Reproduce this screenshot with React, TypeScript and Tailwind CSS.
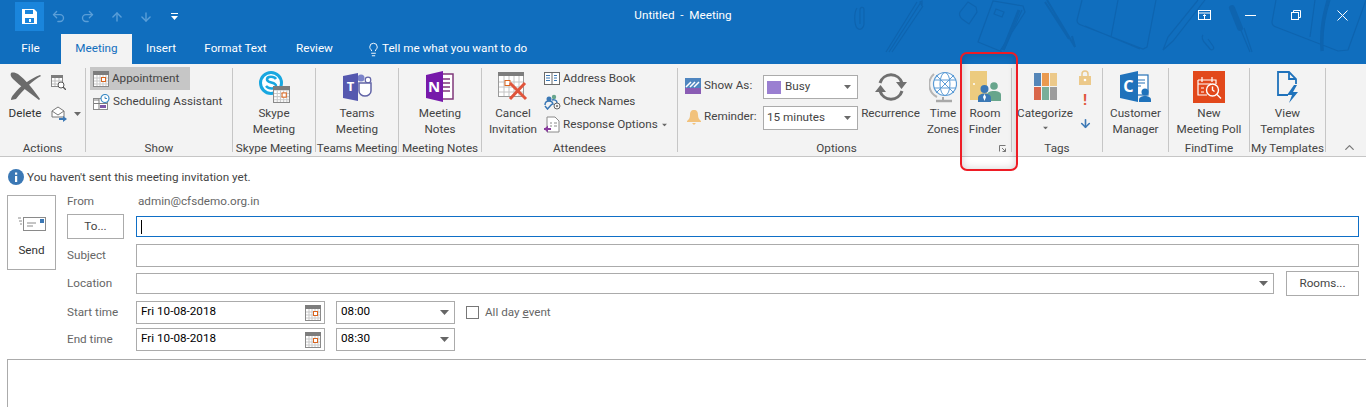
import type { ReactNode } from 'react';
import { ArrowDown, ArrowUp, ChevronUp, Lightbulb, Redo2, Undo2 } from 'lucide-react';

const Caret = ({ className = '' }: { className?: string }) => (
	<svg width="7" height="4" viewBox="0 0 7 4" className={className}>
		<path d="M0 0h7L3.5 4z" fill="#6a6a6a" />
	</svg>
);

const CalendarIcon = ({ size = 16 }: { size?: number }) => (
	<svg width={size} height={size} viewBox="0 0 16 16" className="shrink-0">
		<rect x="0.5" y="0.5" width="15" height="15" fill="#fff" stroke="#8a8a8a" />
		<rect x="0" y="0" width="16" height="4" fill="#7d7d7d" />
		<path d="M1 7h14M1 10h14M1 13h14M4 4v11M7 4v11M10 4v11M13 4v11" stroke="#c9c9c9" strokeWidth="1" />
		<rect x="8.5" y="6.5" width="4" height="4" fill="#fff" stroke="#d9641e" />
	</svg>
);

const DeleteIcon = () => (
	<svg width="32" height="29" viewBox="0 0 32 29">
		<path d="M1 1c2-1 5 0 7 1 8 6 15 15 22 25l-1 1C20 21 10 14 3 7 1 5 0 3 1 1z" fill="#6b6b6b" />
		<path d="M30 3l1 1C23 8 14 17 6 27l-5 1c0-2 1-4 3-6C11 13 20 7 30 3z" fill="#6b6b6b" />
	</svg>
);

const SkypeIcon = () => (
	<div className="relative w-[32px] h-[33px]">
		<svg width="26" height="26" viewBox="0 0 26 26">
			<circle cx="13" cy="13" r="10.5" fill="#fff" stroke="#18a7e0" strokeWidth="3" />
			<path d="M18 9c-2-3-9-3-9 0.500 0 4 9 2 9 6.500 0 3-7 3.500-10 0" fill="none" stroke="#18a7e0" strokeWidth="2.600" />
		</svg>
		<div className="absolute right-0 bottom-0 bg-white">
			<CalendarIcon size={17} />
		</div>
	</div>
);

const TeamsIcon = () => (
	<svg width="30" height="30" viewBox="0 0 30 30">
		<circle cx="19" cy="6" r="3.5" fill="#7b83c9" />
		<circle cx="26" cy="8" r="2.800" fill="#fff" stroke="#6264a7" strokeWidth="1.200" />
		<path d="M17 11h12v8c0 3-3 5-6 5s-6-2-6-5z" fill="#fff" stroke="#6264a7" strokeWidth="1.500" />
		<path d="M1 4l15-3v28L1 26z" fill="#5558af" />
		<text x="8.500" y="19" textAnchor="middle" fontSize="13" fontWeight="700" fill="#fff" fontFamily="Noto Sans">T</text>
	</svg>
);

const OneNoteIcon = () => (
	<svg width="30" height="31" viewBox="0 0 30 31">
		<rect x="13" y="3" width="15" height="25" fill="#fff" stroke="#80397b" strokeWidth="1.500" />
		<path d="M17 8h8M17 12h8M17 16h8M17 20h8" stroke="#80397b" strokeWidth="1.500" />
		<path d="M1 4l17-4v31L1 27z" fill="#7719aa" />
		<text x="9" y="21" textAnchor="middle" fontSize="15" fontWeight="700" fill="#fff" fontFamily="Noto Sans">N</text>
	</svg>
);

const CancelIcon = () => (
	<svg width="30" height="29" viewBox="0 0 30 29">
		<rect x="0.500" y="0.500" width="25" height="24" fill="#fff" stroke="#9a9a9a" />
		<rect width="26" height="4" fill="#7d7d7d" />
		<path d="M1 10h24M1 15h24M1 20h24M6 4v20M11 4v20M16 4v20M21 4v20" stroke="#c4c4c4" />
		<rect x="7" y="8.500" width="5" height="5" fill="#fff" stroke="#d9641e" />
		<path d="M12 11l16 16M27 11L12 27" stroke="#e0553c" strokeWidth="3" />
	</svg>
);

const RecurrenceIcon = () => (
	<svg width="32" height="32" viewBox="0 0 32 32" fill="none">
		<path d="M5 12A11.500 11.500 0 0 1 27 12" stroke="#707070" strokeWidth="3" />
		<path d="M27 20A11.500 11.500 0 0 1 5 20" stroke="#707070" strokeWidth="3" />
		<path d="M21 11h11l-5.500 7zM0 21h11l-5.500-7z" fill="#707070" />
	</svg>
);

const GlobeIcon = () => (
	<svg width="28" height="32" viewBox="0 0 28 32" fill="none">
		<path d="M5 3A14 14 0 0 0 8 26" stroke="#b5b5b5" strokeWidth="2" />
		<path d="M7 30h16" stroke="#a8a8a8" strokeWidth="2.500" />
		<path d="M14 26v4" stroke="#a8a8a8" strokeWidth="2" />
		<circle cx="16" cy="13" r="11.500" fill="#fff" stroke="#5b9bd5" strokeWidth="1.200" />
		<ellipse cx="16" cy="13" rx="5" ry="11.500" stroke="#5b9bd5" />
		<path d="M5 9h22M5 17h22M7 4l18 18M25 4L7 22" stroke="#5b9bd5" />
	</svg>
);

const RoomIcon = () => (
	<svg width="31" height="31" viewBox="0 0 31 31">
		<rect x="0" y="0" width="17" height="29" fill="#eccb7f" />
		<circle cx="4" cy="13" r="1" fill="#fff" />
		<circle cx="24" cy="15" r="3.800" fill="#67a58c" />
		<path d="M17 30v-6c0-3 3-4 7-4s7 1 7 4v6z" fill="#67a58c" />
		<circle cx="14.500" cy="18" r="4" fill="#3b78b5" />
		<path d="M8 31v-4c0-3 3-4.500 6.500-4.500S21 24 21 27v4z" fill="#3b78b5" />
		<path d="M14.500 23l-1.500 3 1.500 4 1.500-4z" fill="#fff" />
	</svg>
);

const CategorizeIcon = () => (
	<div className="grid grid-cols-3 grid-rows-2 gap-px w-[23px] h-[27px]">
		<div className="bg-[#5586b8]" />
		<div className="bg-[#ea9a50]" />
		<div className="bg-[#ecc98a]" />
		<div className="bg-[#d9664a]" />
		<div className="bg-[#79ae99]" />
		<div className="bg-[#9c9c9c]" />
	</div>
);

const CustomerIcon = () => (
	<svg width="31" height="31" viewBox="0 0 31 31">
		<rect x="14" y="4" width="14" height="20" fill="#fff" stroke="#2672b8" strokeWidth="1.200" />
		<path d="M18 9h7M18 12h7M18 15h3" stroke="#2672b8" strokeWidth="1.200" />
		<path d="M0 4l18-4v31L0 27z" fill="#1f72bb" />
		<text x="8.500" y="21" textAnchor="middle" fontSize="16" fontWeight="700" fill="#fff" fontFamily="Noto Sans">C</text>
		<circle cx="25" cy="21" r="3.500" fill="#1f72bb" />
		<path d="M19 31v-2c0-3 3-4 6-4s6 1 6 4v2z" fill="#1f72bb" />
	</svg>
);

const PollIcon = () => (
	<svg width="32" height="32" viewBox="0 0 32 32" fill="none">
		<rect width="32" height="32" fill="#e2481b" />
		<path d="M5 9h18v4M5 9v15h9M5 13h13M9 6v5M19 6v5M8 17h3M8 21h3" stroke="#fff" strokeWidth="1.200" />
		<circle cx="19.500" cy="19" r="6" stroke="#fff" strokeWidth="1.400" />
		<path d="M19.500 15.500V19l2 1.500M24 23.500l4 4" stroke="#fff" strokeWidth="1.400" />
	</svg>
);

const TemplatesIcon = () => (
	<svg width="24" height="32" viewBox="0 0 24 32" fill="none">
		<path d="M12 24H2V1h11l7 7v5M13 1v7h7" stroke="#1f72bb" strokeWidth="1.800" />
		<path d="M18 14l-7 10h5l-3 8 9-11h-5l4-7z" fill="#1f72bb" />
	</svg>
);

const SmallCalPeek = () => (
	<svg width="15" height="15" viewBox="0 0 15 15" fill="none">
		<rect x="0.500" y="0.500" width="11" height="11" fill="#fff" stroke="#8a8a8a" />
		<rect width="12" height="3" fill="#7d7d7d" />
		<path d="M1 6h10M1 9h10M4 3v8M8 3v8" stroke="#bdbdbd" />
		<circle cx="10" cy="10" r="3" fill="#fff" stroke="#555" />
		<path d="M12 12l3 3" stroke="#555" strokeWidth="1.300" />
	</svg>
);

const MoveIcon = () => (
	<svg width="16" height="16" viewBox="0 0 16 16" fill="none">
		<path d="M1 5l6-4 6 4v6H1z" fill="#fff" stroke="#777" />
		<path d="M1 5l6 4 6-4" stroke="#777" />
		<path d="M8 13h5" stroke="#3b78b5" strokeWidth="2" />
		<path d="M12 10l4 3-4 3z" fill="#3b78b5" />
	</svg>
);

const ScheduleIcon = () => (
	<svg width="17" height="16" viewBox="0 0 17 16" fill="none">
		<rect x="0.500" y="4.500" width="14" height="11" fill="#fff" stroke="#8a8a8a" />
		<path d="M1 6h5M6 5v10M1 9.500h13" stroke="#7d7d7d" />
		<rect x="7" y="11" width="6" height="3" fill="#7e57a8" />
		<circle cx="12" cy="4.500" r="4" fill="#fff" stroke="#3b8ac4" strokeWidth="1.200" />
		<path d="M12 2.500v2h2" stroke="#3b8ac4" />
	</svg>
);

const AddressIcon = () => (
	<svg width="16" height="13" viewBox="0 0 16 13" fill="none">
		<rect x="0.500" y="0.500" width="15" height="12" fill="#fff" stroke="#6a6a6a" />
		<path d="M8 1v11" stroke="#6a6a6a" />
		<path d="M2 3.500h4M2 6h4M2 8.500h4M10 3.500h3M10 6h3M10 8.500h3" stroke="#3b78b5" />
	</svg>
);

const CheckNamesIcon = () => (
	<svg width="17" height="16" viewBox="0 0 17 16" fill="none">
		<circle cx="5" cy="5" r="2.500" fill="#3b78b5" />
		<circle cx="10" cy="3" r="2.200" fill="#67a58c" />
		<path d="M1 11c0-3 2-4 4-4s4 1 4 4M8 6c2-.5 5 0 5 3" stroke="#3b78b5" strokeWidth="1.500" />
		<path d="M1 12l2.500 3L8 10" stroke="#3b78b5" strokeWidth="1.500" />
		<circle cx="13" cy="12" r="3" stroke="#666" />
		<circle cx="13" cy="12" r="1" fill="#666" />
	</svg>
);

const ResponseIcon = () => (
	<svg width="16" height="17" viewBox="0 0 16 17" fill="none">
		<path d="M3 1h8l4 4v11H3z" fill="#fff" stroke="#8a8a8a" />
		<path d="M6 7h2M10 7h3M6 10h2M10 10h3" stroke="#8a8a8a" />
		<path d="M0 13h7" stroke="#8a3d9e" strokeWidth="2" />
		<path d="M4 9.500L0 13l4 3.500z" fill="#8a3d9e" />
	</svg>
);

const ShowAsIcon = () => (
	<svg width="16" height="16" viewBox="0 0 16 16">
		<rect width="16" height="11" fill="#4f86c0" />
		<rect y="10" width="16" height="6" fill="#8a5cb4" />
		<path d="M1 9l5-5M5 9l5-5M9 9l5-5" stroke="#fff" strokeWidth="1.500" />
	</svg>
);

const BellIcon = () => (
	<svg width="14" height="15" viewBox="0 0 14 15">
		<path d="M7 0c3 0 4 2 4 5 0 3 1 4 3 6v1H0v-1c2-2 3-3 3-6 0-3 1-5 4-5z" fill="#f2c27c" />
		<path d="M5 13h4l-2 2z" fill="#f2c27c" />
	</svg>
);

const LockIcon = () => (
	<svg width="12" height="15" viewBox="0 0 12 15" fill="none">
		<path d="M3 7V4a3 3 0 0 1 6 0v3" stroke="#e9c78b" strokeWidth="1.500" />
		<rect y="6" width="12" height="9" fill="#ecc98a" />
		<circle cx="6" cy="10" r="1.300" fill="#fff" />
	</svg>
);

const SendIcon = () => (
	<svg width="28" height="14" viewBox="0 0 28 14" fill="none">
		<rect x="5.500" y="0.500" width="22" height="13" fill="#fff" stroke="#8a8a8a" />
		<rect x="22" y="2" width="4" height="4" fill="#3b78b5" />
		<path d="M9 6h9M9 9h6M0 1h3M1 4h3M2 7h2" stroke="#8a8a8a" />
	</svg>
);

const TitleDoodles = () => (
	<svg width="1366" height="64" viewBox="0 0 1366 64" fill="none" stroke="#0e64af" strokeWidth="1.200" className="absolute left-0 top-0 pointer-events-none">
		<path d="M857 8c-3 4-3 16 0 20 3 3 7 0 7-4l0-14c0-4-4-3-4 0v14" />
		<path d="M921 2l-32 50M917 2l-31 50M923 6l-31 46M920 2l2-1 0 5z" />
		<path d="M968 2l-8 10c-1 2 0 5 2 7l7 5 8-12-1-5z" />
		<path d="M993 1l-15 41 22 9 25-39-2-6zM1022 10l-18 40M1000 50l3 4M996 9l8 3-2 5-8-3z" />
		<path d="M1019 10l-16 40" strokeWidth="3" />
		<path d="M1047 0l28 47-3-11M1045 2l24 37" strokeWidth="2" />
		<path d="M1082 0l-5 20c0 3 1 4 4 5l62 24 4-2 9-47M1118 0l-7 37M1085 26l55 23" />
		<path d="M1198 0l-30 37-5 13 10-9 32-41" />
		<path d="M1203 35c-2 2 0 6 2 8l5 6c2 2 5 0 3-3l-5-7" />
		<path d="M1232 8l8 20" strokeWidth="6" strokeLinecap="round" />
		<path d="M1240 28l10 24M1244 28l8 24" />
		<path d="M1276 0l-4 22c0 3 1 4 4 5l62 24 10-1 18-50M1315 0l-5 37M1330 0c-4 12-8 30-7 51" />
		<path d="M1328 0c-4 14-8 30-6 51" strokeWidth="3" />
	</svg>
);

const Separator = () => <div className="w-px h-[84px] mt-[4px] bg-[#c6c6c6] shrink-0" />;

type GroupProps = {
	width: string;
	label?: string;
	labelClass?: string;
	children: ReactNode;
};

const Group = ({ width, label, labelClass = '', children }: GroupProps) => (
	<div className={`${width} h-[92px] pt-[4px] flex flex-col shrink-0 relative`}>
		<div className="flex-1 flex min-h-0">{children}</div>
		<div className={`h-[16px] leading-[16px] text-center whitespace-nowrap ${labelClass}`}>{label}</div>
	</div>
);

const LargeButton = ({ icon, lines, className = 'flex-1' }: { icon: ReactNode; lines: string[]; className?: string }) => (
	<div className={`${className} flex flex-col items-center`}>
		<div className="h-[37px] flex items-center justify-center">{icon}</div>
		{lines.map((line) => (
			<div key={line} className="leading-[16px] whitespace-nowrap">
				{line}
			</div>
		))}
	</div>
);

const SmallButton = ({ icon, label, caret }: { icon: ReactNode; label: string; caret?: boolean }) => (
	<div className="h-[23px] flex items-center">
		<div className="w-[19px] flex justify-start">{icon}</div>
		<span className="whitespace-nowrap">{label}</span>
		{caret && <Caret className="ml-[3px] scale-75" />}
	</div>
);

const RibbonSelect = ({ children }: { children: ReactNode }) => (
	<div className="w-[95px] h-[24px] bg-white border border-[#ababab] flex items-center pl-[3px] pr-[6px] justify-between text-[#444]">
		<div className="flex items-center">{children}</div>
		<Caret />
	</div>
);

const Ribbon = () => (
	<div className="h-[93px] bg-[#f3f3f3] border-b border-[#c6c6c6] flex text-[#444]">
		<Group width="w-[85px]" label="Actions">
			<div className="w-[50px] flex flex-col items-center">
				<div className="h-[37px] flex items-center justify-center pl-[1px]">
					<DeleteIcon />
				</div>
				<div className="leading-[16px] text-[#333]">Delete</div>
			</div>
			<div className="flex flex-col pl-[1px] pt-[7px]">
				<SmallCalPeek />
				<div className="flex items-center mt-[16px]">
					<MoveIcon />
					<Caret className="ml-[7px]" />
				</div>
			</div>
		</Group>
		<Separator />
		<Group width="w-[146px]" label="Show">
			<div className="flex flex-col pl-[4px] -mt-[1px]">
				<div className="w-[100px] h-[23px] bg-[#c6c6c6] flex items-center pl-[3px] gap-[3px]">
					<CalendarIcon />
					<span>Appointment</span>
				</div>
				<div className="h-[23px] flex items-center pl-[3px] gap-[3px] whitespace-nowrap">
					<ScheduleIcon />
					<span>Scheduling Assistant</span>
				</div>
			</div>
		</Group>
		<Separator />
		<Group width="w-[82px]" label="Skype Meeting">
			<LargeButton icon={<SkypeIcon />} lines={['Skype', 'Meeting']} />
		</Group>
		<Separator />
		<Group width="w-[82px]" label="Teams Meeting">
			<LargeButton icon={<TeamsIcon />} lines={['Teams', 'Meeting']} />
		</Group>
		<Separator />
		<Group width="w-[82px]" label="Meeting Notes">
			<LargeButton icon={<OneNoteIcon />} lines={['Meeting', 'Notes']} />
		</Group>
		<Separator />
		<Group width="w-[195px]" label="Attendees">
			<LargeButton className="w-[62px]" icon={<CancelIcon />} lines={['Cancel', 'Invitation']} />
			<div className="flex flex-col -mt-[1px]">
				<SmallButton icon={<AddressIcon />} label="Address Book" />
				<SmallButton icon={<CheckNamesIcon />} label="Check Names" />
				<SmallButton icon={<ResponseIcon />} label="Response Options" caret />
			</div>
		</Group>
		<Separator />
		<Group width="w-[333px]" label="Options" labelClass="pr-[16px]">
			<div className="w-[85px] flex flex-col pl-[7px] pt-[6px] gap-[7px]">
				<div className="h-[24px] flex items-center gap-[3px]">
					<ShowAsIcon />
					<span>Show As:</span>
				</div>
				<div className="h-[24px] flex items-center gap-[3px]">
					<span className="pl-[2px]"><BellIcon /></span>
					<span>Reminder:</span>
				</div>
			</div>
			<div className="flex flex-col pt-[7px] gap-[7px]">
				<RibbonSelect>
					<span className="w-[14px] h-[13px] bg-[#9a7fd1] mr-[4px]" />
					<span>Busy</span>
				</RibbonSelect>
				<RibbonSelect>
					<span>15 minutes</span>
				</RibbonSelect>
			</div>
			<LargeButton className="w-[65px]" icon={<RecurrenceIcon />} lines={['Recurrence']} />
			<LargeButton className="w-[40px]" icon={<GlobeIcon />} lines={['Time', 'Zones']} />
			<LargeButton className="w-[44px]" icon={<RoomIcon />} lines={['Room', 'Finder']} />
		</Group>
		<Separator />
		<Group width="w-[90px]" label="Tags">
			<div className="w-[66px] flex flex-col items-center">
				<div className="h-[37px] flex items-center justify-center">
					<CategorizeIcon />
				</div>
				<div className="leading-[16px]">Categorize</div>
				<Caret className="mt-[5px] scale-75" />
			</div>
			<div className="w-[14px] flex flex-col items-center -mt-[2px]">
				<div className="h-[23px] flex items-center"><LockIcon /></div>
				<div className="h-[23px] flex items-center text-[#e0553c] font-bold text-[15px]">!</div>
				<div className="h-[23px] flex items-center"><ArrowDown size={13} strokeWidth={3} className="text-[#3b78b5]" /></div>
			</div>
		</Group>
		<Separator />
		<Group width="w-[65px]">
			<LargeButton icon={<CustomerIcon />} lines={['Customer', 'Manager']} />
		</Group>
		<Separator />
		<Group width="w-[80px]" label="FindTime">
			<LargeButton icon={<PollIcon />} lines={['New', 'Meeting Poll']} />
		</Group>
		<Separator />
		<Group width="w-[75px]" label="My Templates">
			<LargeButton icon={<TemplatesIcon />} lines={['View', 'Templates']} />
		</Group>
		<Separator />
		<div className="flex-1 flex items-end justify-end pr-[9px] pb-[1px]">
			<ChevronUp size={15} strokeWidth={2} className="text-[#777]" />
		</div>
	</div>
);

const FieldLabel = ({ children }: { children: ReactNode }) => <div className="w-[69px] shrink-0 text-[#666]">{children}</div>;

const DateField = ({ value, time }: { value: string; time: string }) => (
	<>
		<div className="w-[189px] h-full border border-[#ababab] flex items-center justify-between pl-[4px] pr-[3px] text-black">
			<span className="pb-[2px]">{value}</span>
			<CalendarIcon />
		</div>
		<div className="w-[119px] h-full ml-[11px] border border-[#ababab] flex items-center justify-between pl-[4px] pr-[5px] text-black">
			<span className="pb-[2px]">{time}</span>
			<svg width="9" height="5" viewBox="0 0 9 5"><path d="M0 0h9L4.500 5z" fill="#666" /></svg>
		</div>
	</>
);

const App = () => (
	<div className="w-[1366px] h-[407px] overflow-hidden bg-white relative font-['Roboto',sans-serif] text-[11.7px] leading-none">
		{/* title bar and tabs */}
		<div className="h-[64px] bg-[#106ebe] relative text-white">
			<TitleDoodles />
			<div className="h-[34px] flex items-start relative">
				<div className="flex items-center pl-[15px] pt-[2px]">
					<div className="w-[29px] h-[29px] bg-[#1a85dc] flex items-center justify-center">
						<svg width="15" height="15" viewBox="0 0 15 15">
							<path d="M0 0h12l3 3v12H0z" fill="#fff" />
							<path d="M3 1h8v4H3zM3 9h9v5H3z" fill="#1a85dc" />
							<rect x="7" y="10" width="2" height="3" fill="#fff" />
						</svg>
					</div>
					<div className="flex items-center text-[#5a9ed8]">
						<div className="w-[29px] flex justify-center"><Undo2 size={15} strokeWidth={2.2} /></div>
						<div className="w-[29px] flex justify-center"><Redo2 size={15} strokeWidth={2.2} /></div>
						<div className="w-[29px] flex justify-center"><ArrowUp size={14} strokeWidth={2.4} /></div>
						<div className="w-[29px] flex justify-center"><ArrowDown size={14} strokeWidth={2.4} /></div>
						<div className="w-[29px] flex justify-center">
							<svg width="7" height="7" viewBox="0 0 7 7" className="text-white"><path d="M0 0.500h7" stroke="#fff" /><path d="M0 3h7L3.500 7z" fill="#fff" /></svg>
						</div>
					</div>
				</div>
				<div className="absolute left-0 right-0 top-[16px] text-center leading-none -translate-y-1/2">Untitled&nbsp; -&nbsp; Meeting</div>
				<div className="ml-auto flex items-center h-[30px] pr-[1px]">
					<div className="w-[46px] flex justify-center">
						<svg width="13" height="10" viewBox="0 0 13 10" fill="none" stroke="#fff"><rect x="0.500" y="0.500" width="12" height="9" /><path d="M1 3h11M6.500 9V5M5 6l1.500-1.500L8 6" /></svg>
					</div>
					<div className="w-[46px] flex justify-center">
						<svg width="11" height="1" viewBox="0 0 11 1"><rect width="11" height="1" fill="#fff" /></svg>
					</div>
					<div className="w-[46px] flex justify-center">
						<svg width="10" height="10" viewBox="0 0 10 10" fill="none" stroke="#fff"><rect x="0.500" y="2.500" width="7" height="7" /><path d="M2.500 2V0.500h7v7H8" /></svg>
					</div>
					<div className="w-[46px] flex justify-center">
						<svg width="11" height="11" viewBox="0 0 11 11" fill="none" stroke="#fff"><path d="M0.500 0.500l10 10M10.500 0.500l-10 10" /></svg>
					</div>
				</div>
			</div>
			<div className="h-[30px] flex items-center relative">
				<div className="w-[61px] text-center">File</div>
				<div className="w-[71px] h-full bg-[#f3f3f3] text-[#106ebe] flex items-center justify-center">Meeting</div>
				<div className="w-[58px] text-center">Insert</div>
				<div className="w-[91px] text-center">Format Text</div>
				<div className="w-[67px] text-center">Review</div>
				<div className="flex items-center pl-[18px] gap-[1px]">
					<Lightbulb size={15} strokeWidth={1.5} />
					<span>Tell me what you want to do</span>
				</div>
			</div>
		</div>
		<Ribbon />
		{/* message bar */}
		<div className="h-[38px] pl-[8px] pt-[12px] flex items-start gap-[3px] text-[#444]">
			<svg width="16" height="16" viewBox="0 0 16 16" className="shrink-0">
				<circle cx="8" cy="8" r="8" fill="#3b78b5" />
				<rect x="7" y="7" width="2.200" height="6" fill="#fff" />
				<rect x="7" y="3.500" width="2.200" height="2.200" fill="#fff" />
			</svg>
			<span className="leading-[16px]">You haven't sent this meeting invitation yet.</span>
		</div>
		{/* compose form */}
		<div className="flex pl-[7px] pr-[7px]">
			<div className="w-[49px] h-[75px] border border-[#ababab] flex flex-col items-center pt-[21px] gap-[14px] shrink-0 text-[#333]">
				<SendIcon />
				<span>Send</span>
			</div>
			<div className="flex-1 ml-[11px] text-[#666]">
				<div className="h-[19px] pt-[1px] flex items-start">
					<FieldLabel>From</FieldLabel>
					<span className="pl-[2px]">admin@cfsdemo.org.in</span>
				</div>
				<div className="h-[25px] flex items-center">
					<div className="w-[57px] h-full border border-[#ababab] flex items-center justify-center text-[#444] mr-[12px]">To...</div>
					<div className="flex-1 h-[21px] border border-[#0f6fc6] flex items-center pl-[4px]">
						<div className="w-px h-[14px] bg-black" />
					</div>
				</div>
				<div className="h-[23px] mt-[5px] flex items-center">
					<FieldLabel>Subject</FieldLabel>
					<div className="flex-1 h-full border border-[#ababab]" />
				</div>
				<div className="h-[21px] mt-[6px] flex items-center">
					<FieldLabel>Location</FieldLabel>
					<div className="w-[1138px] h-full border border-[#ababab] flex items-center justify-end pr-[5px]">
						<svg width="9" height="5" viewBox="0 0 9 5"><path d="M0 0h9L4.500 5z" fill="#666" /></svg>
					</div>
					<div className="ml-[12px] flex-1 h-[25px] border border-[#ababab] flex items-center justify-center text-[#444]">Rooms...</div>
				</div>
				<div className="h-[23px] mt-[7px] flex items-center">
					<FieldLabel>Start time</FieldLabel>
					<DateField value="Fri 10-08-2018" time="08:00" />
					<div className="ml-[11px] w-[13px] h-[13px] border border-[#777] bg-white" />
					<span className="ml-[6px]">All day <span className="underline">e</span>vent</span>
				</div>
				<div className="h-[23px] mt-[4px] flex items-center">
					<FieldLabel>End time</FieldLabel>
					<DateField value="Fri 10-08-2018" time="08:30" />
				</div>
			</div>
		</div>
		{/* message body */}
		<div className="ml-[7px] mt-[8px] h-[60px] border-l border-t border-[#ababab]" />
		{/* callout drawn over the screenshot */}
		<div className="absolute left-[960px] top-[52px] w-[58px] h-[119px] border-2 border-[#ee1c25] rounded-[7px] shadow-[inset_0_0_8px_rgba(0,0,0,0.18)] pointer-events-none">
			<svg width="7" height="7" viewBox="0 0 7 7" className="absolute left-[37px] top-[91px]" fill="none" stroke="#777">
				<path d="M0.500 6.500v-6h6M3 3l3.500 3.500M6.500 3.500v3h-3" />
			</svg>
		</div>
	</div>
);

export default App;
